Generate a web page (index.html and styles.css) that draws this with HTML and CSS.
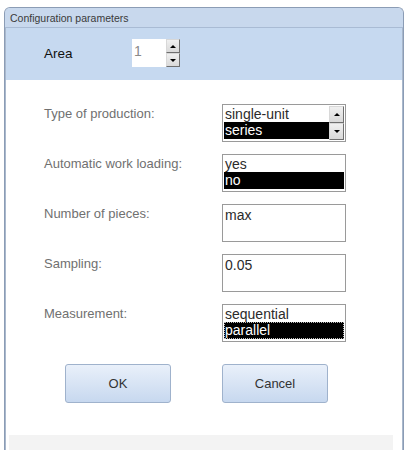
FILE: index.html
```html
<!DOCTYPE html>
<html>
<head>
<meta charset="utf-8">
<link rel="stylesheet" href="styles.css">
</head>
<body>
<div class="window">
  <div class="titlebar">Configuration parameters</div>
  <div class="area">
    <span class="area-label">Area</span>
    <div class="spinner">
      <div class="spin-input">1</div>
      <div class="spin-btns">
        <div class="sbtn"><span class="tri-up"></span></div>
        <div class="sbtn"><span class="tri-down"></span></div>
      </div>
    </div>
  </div>
  <div class="content">
    <div class="row">
      <div class="label">Type of production:</div>
      <div class="box listbox scroll">
        <div class="items">
          <div class="item">single-unit</div>
          <div class="item sel">series</div>
        </div>
        <div class="vscroll">
          <div class="sbtn tall"><span class="tri-up"></span></div>
          <div class="sbtn tall"><span class="tri-down"></span></div>
        </div>
      </div>
    </div>
    <div class="row">
      <div class="label">Automatic work loading:</div>
      <div class="box listbox">
        <div class="items">
          <div class="item">yes</div>
          <div class="item sel">no</div>
        </div>
      </div>
    </div>
    <div class="row">
      <div class="label">Number of pieces:</div>
      <div class="box textbox">max</div>
    </div>
    <div class="row">
      <div class="label">Sampling:</div>
      <div class="box textbox">0.05</div>
    </div>
    <div class="row">
      <div class="label">Measurement:</div>
      <div class="box listbox">
        <div class="items">
          <div class="item">sequential</div>
          <div class="item sel focus">parallel</div>
        </div>
      </div>
    </div>
    <div class="buttons">
      <div class="btn ok">OK</div>
      <div class="btn cancel">Cancel</div>
    </div>
  </div>
  <div class="footer"></div>
</div>
</body>
</html>
```
FILE: styles.css
```css
html, body {
  margin: 0;
  padding: 0;
  background: #ffffff;
}
body {
  padding: 7px 4px 0 4px;
  font-family: "Liberation Sans", Arial, sans-serif;
}
.window {
  width: 400px;
  height: 443px;
  box-sizing: border-box;
  border: 1px solid #8b9cb5;
  border-bottom: none;
  border-radius: 6px 6px 0 0;
  box-shadow: inset 1px 0 0 #a9b8cc, inset -1px 0 0 #a9b8cc;
  display: flex;
  flex-direction: column;
  overflow: hidden;
  background: #ffffff;
}
.titlebar {
  height: 19px;
  background: #c8d8ed;
  border-bottom: 1px solid #a9bbd4;
  font-size: 10.5px;
  line-height: 20px;
  color: #3a3a3a;
  padding-left: 5px;
  flex: none;
}
.area {
  height: 52px;
  background: #c6d9f0;
  display: flex;
  align-items: center;
  flex: none;
  box-shadow: inset 1px 0 0 #a9b8cc, inset -1px 0 0 #a9b8cc;
}
.area-label {
  margin-left: 39px;
  width: 88px;
  font-size: 13.5px;
  color: #111;
  margin-top: -2px;
}
.spinner {
  display: flex;
  height: 28px;
  margin-top: -2px;
}
.spin-input {
  width: 32px;
  height: 28px;
  background: #fff;
  font-size: 14px;
  color: #8a8a8a;
  line-height: 24px;
  padding-left: 2px;
  box-sizing: border-box;
  width: 34px;
}
.spin-btns {
  display: flex;
  flex-direction: column;
  width: 14px;
}
.sbtn {
  flex: 1;
  box-sizing: border-box;
  border: 1px solid #6f6f6f;
  border-top-color: #d8d8d8;
  border-left-color: #d8d8d8;
  background: linear-gradient(#f0f0f0, #d9d9d9);
  display: flex;
  align-items: center;
  justify-content: center;
}
.tri-up, .tri-down {
  width: 0;
  height: 0;
  border-left: 3px solid transparent;
  border-right: 3px solid transparent;
}
.tri-up { border-bottom: 3px solid #000; }
.tri-down { border-top: 3px solid #000; }

.content {
  flex: 1;
  padding: 24px 0 0 39px;
  display: flex;
  flex-direction: column;
  gap: 12px;
  box-shadow: inset 1px 0 0 #a9b8cc, inset -1px 0 0 #a9b8cc;
}
.row {
  display: grid;
  grid-template-columns: 178px 124px;
  height: 38px;
}
.label {
  font-size: 13px;
  color: #707070;
  padding-top: 2px;
}
.box {
  box-sizing: border-box;
  height: 38px;
  border: 1px solid #9a9a9a;
  background: #fff;
  font-size: 14px;
  color: #2b2b2b;
}
.listbox {
  display: flex;
  padding: 1px 1px 1px 1px;
}
.items {
  flex: 1;
  display: flex;
  flex-direction: column;
}
.item {
  height: 16px;
  line-height: 17px;
  padding-left: 1px;
}
.item.sel {
  height: 17px;
  background: #000;
  color: #fff;
}
.item.focus {
  outline: 1px dotted #bbbbbb;
  outline-offset: -1px;
}
.vscroll {
  width: 15px;
  display: flex;
  flex-direction: column;
}
.textbox {
  padding: 2px 0 0 2px;
  line-height: 16px;
}
.buttons {
  display: grid;
  grid-template-columns: 157px 106px;
  padding-left: 21px;
  margin-top: 10px;
}
.btn {
  width: 106px;
  height: 39px;
  box-sizing: border-box;
  border: 1px solid #9fb2cc;
  border-radius: 3px;
  background: linear-gradient(#e9f0fa, #c7d8ef);
  font-size: 13px;
  color: #333;
  display: flex;
  align-items: center;
  justify-content: center;
}
.footer {
  flex: none;
  height: 15px;
  margin: 0 10px 0 4px;
  background: #f3f3f3;
}
```
